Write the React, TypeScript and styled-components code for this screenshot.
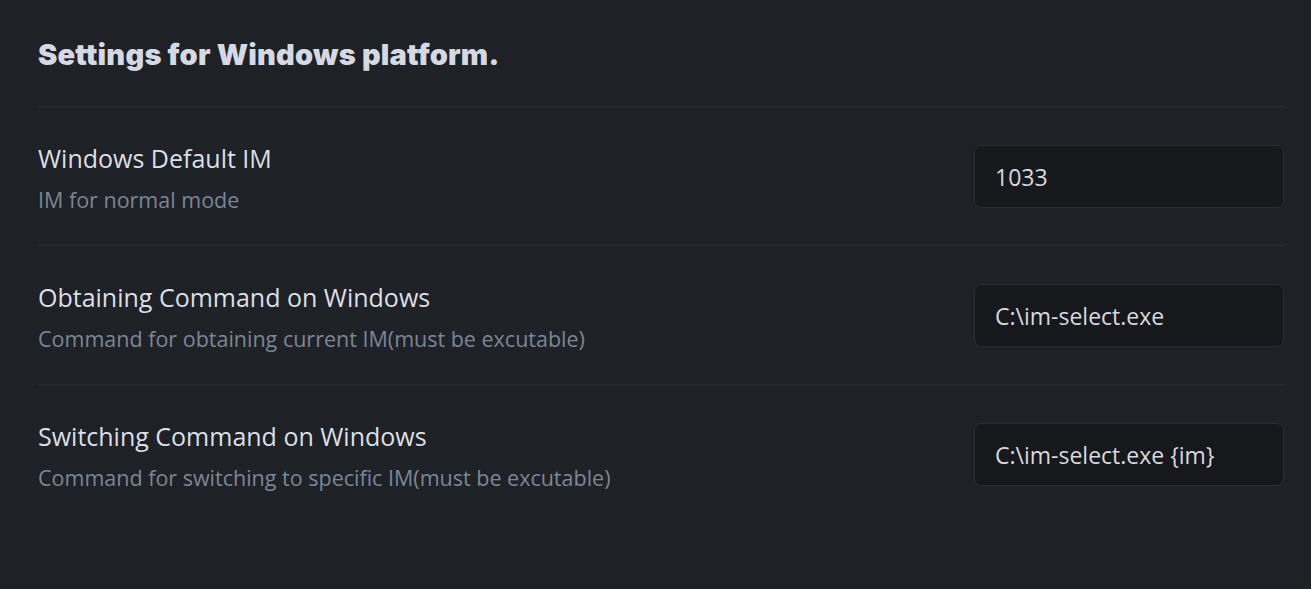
import React from "react";
import styled, { createGlobalStyle } from "styled-components";

const Global = createGlobalStyle`
  html, body { margin: 0; padding: 0; background: #1e2126; }
  body { font-family: "Open Sans", "Noto Sans", sans-serif; }
`;

const Page = styled.div`
  width: 1311px;
  height: 589px;
  box-sizing: border-box;
  padding: 34px 27px 0 38px;
  background: #1e2126;
`;

const Heading = styled.h3`
  margin: 0;
  padding-bottom: 30px;
  font-family: "Inter", "Lato", sans-serif;
  font-weight: 900;
  font-size: 29px;
  line-height: 42px;
  color: #d5d9e3;
  letter-spacing: 0.2px;
  border-bottom: 1px solid #2b2f35;
`;

const Item = styled.div<{ $last?: boolean }>`
  display: flex;
  align-items: center;
  justify-content: space-between;
  height: 138px;
  border-bottom: ${(p) => (p.$last ? "none" : "1px solid #2b2f35")};
`;

const Info = styled.div`
  display: flex;
  flex-direction: column;
  gap: 12px;
  padding-top: 4px;
`;

const Name = styled.div`
  font-size: 25px;
  line-height: 32px;
  color: #dcdfe5;
`;

const Desc = styled.div`
  font-size: 21.5px;
  line-height: 28px;
  color: #7b8696;
`;

const Input = styled.input`
  box-sizing: border-box;
  width: 310px;
  height: 63px;
  padding: 2px 20px 0;
  background: #16181c;
  border: 1px solid #2b2f35;
  border-radius: 7px;
  color: #d6d9df;
  font-family: "Open Sans", "Noto Sans", sans-serif;
  font-size: 23px;
  outline: none;
`;

const rows = [
  { name: "Windows Default IM", desc: "IM for normal mode", value: "1033" },
  {
    name: "Obtaining Command on Windows",
    desc: "Command for obtaining current IM(must be excutable)",
    value: "C:\\im-select.exe",
  },
  {
    name: "Switching Command on Windows",
    desc: "Command for switching to specific IM(must be excutable)",
    value: "C:\\im-select.exe {im}",
  },
];

export default function App() {
  return (
    <>
      <Global />
      <Page>
        <Heading>Settings for Windows platform.</Heading>
        {rows.map((r, i) => (
          <Item key={r.name} $last={i === rows.length - 1}>
            <Info>
              <Name>{r.name}</Name>
              <Desc>{r.desc}</Desc>
            </Info>
            <Input type="text" defaultValue={r.value} spellCheck={false} />
          </Item>
        ))}
      </Page>
    </>
  );
}
